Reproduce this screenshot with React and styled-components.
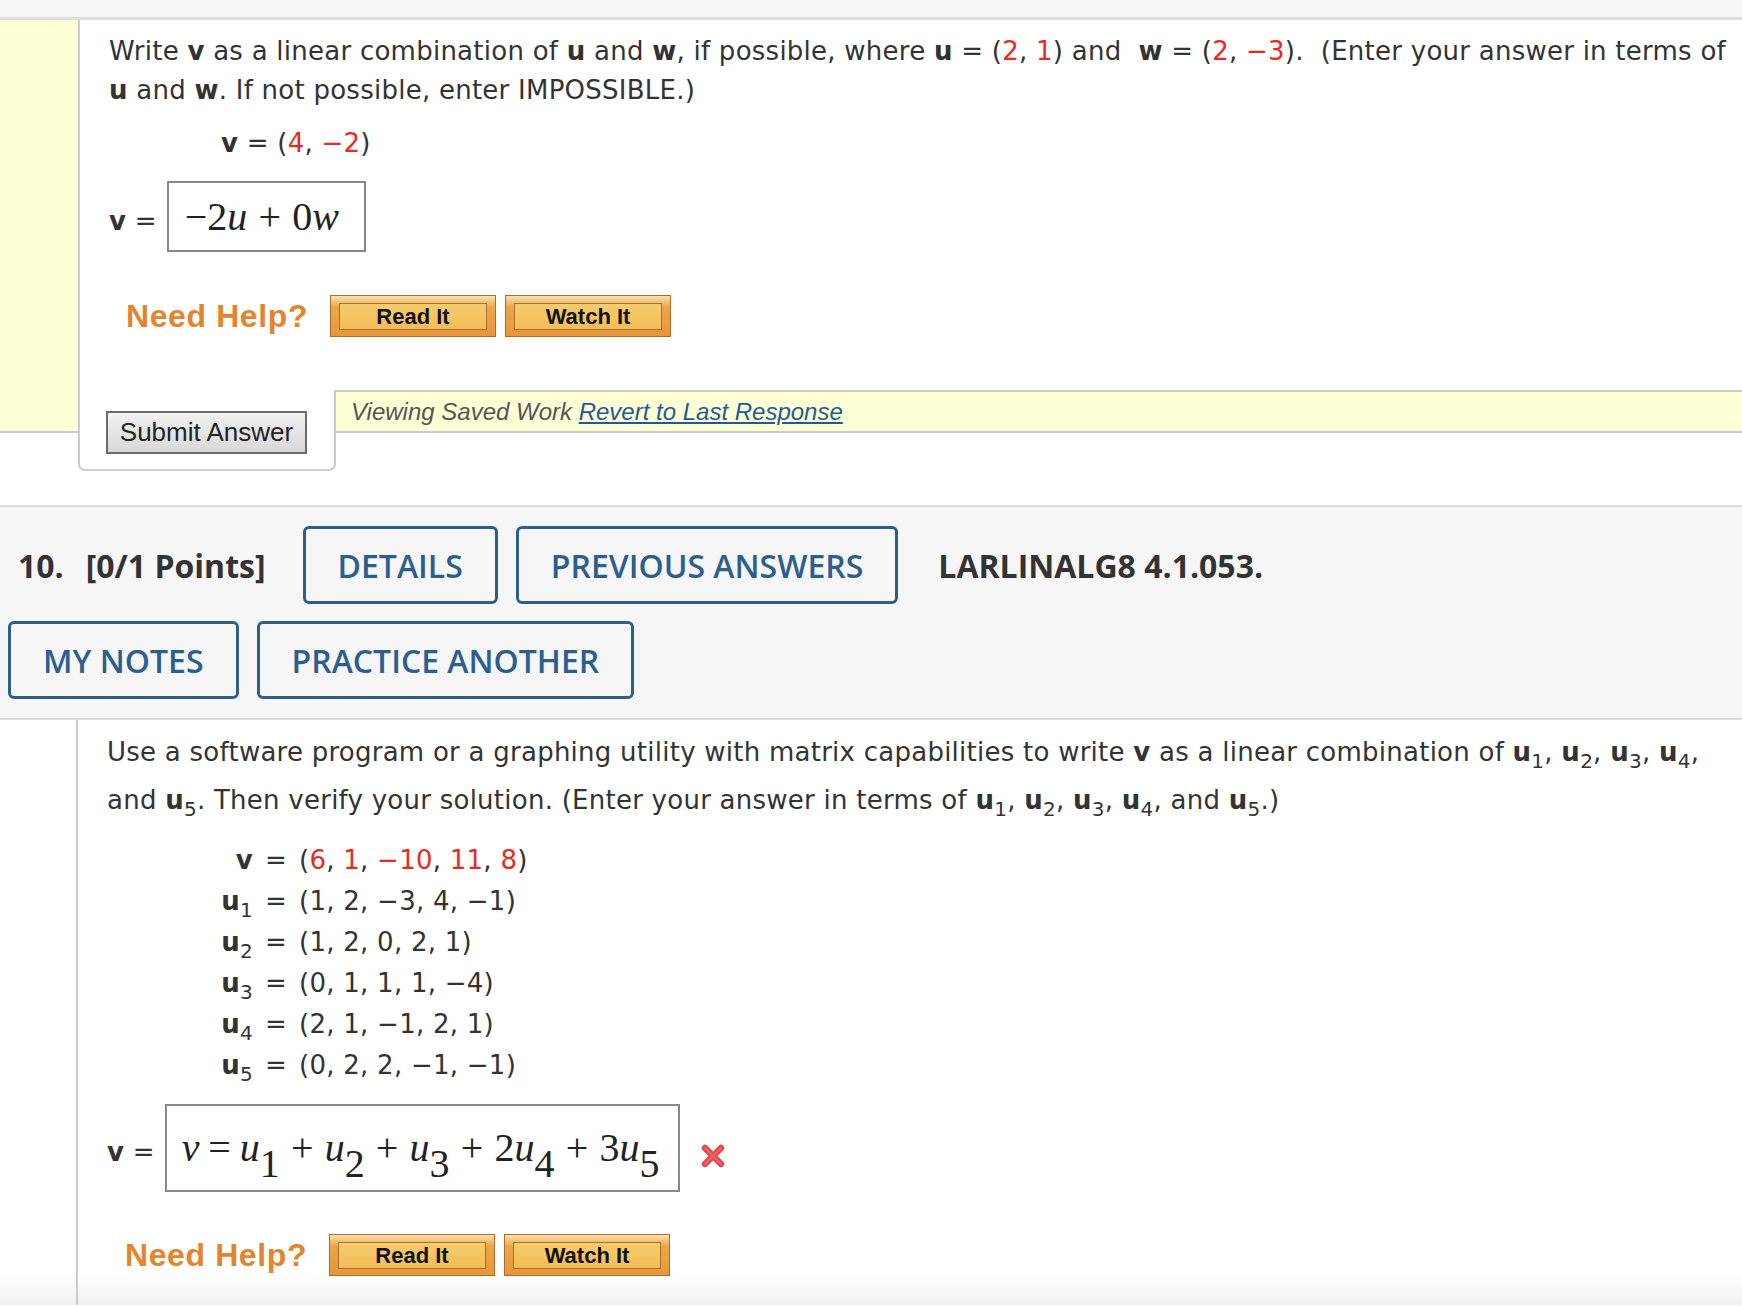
import React from 'react'
import styled, { createGlobalStyle } from 'styled-components'

const GlobalStyle = createGlobalStyle`
  html, body {
    margin: 0;
    padding: 0;
    background: #ffffff;
  }
  body {
    font-family: "DejaVu Sans", Verdana, sans-serif;
    color: #333333;
  }
`

const fadeBg = 'linear-gradient(to bottom, #ffffff calc(100% - 34px), #f1f1f1 100%)'

const Page = styled.div`
  width: 1742px;
  min-height: 1306px;
  overflow: hidden;
`

const TopStrip = styled.div`
  height: 17px;
  background: #f6f6f6;
  border-bottom: 3px solid #dedede;
`

const QuestionRow = styled.div`
  display: flex;
  background: ${(p) => (p.fade ? fadeBg : '#ffffff')};
`

const Gutter = styled.div`
  flex: none;
  width: ${(p) => p.w}px;
  background: ${(p) => (p.yellow ? '#ffffd6' : 'transparent')};
  border-right: 2px solid #cccccc;
`

const QuestionBody = styled.div`
  flex: 1;
  padding: ${(p) => p.pad};
  font-size: 26px;
  line-height: 39px;
  letter-spacing: 0.25px;
`

const Prompt = styled.div`
  white-space: nowrap;
  line-height: ${(p) => p.lh}px;
`

const B = styled.b`
  font-weight: bold;
`

const Red = styled.span`
  color: #ea2a22;
`

const Sub = styled.sub`
  font-size: 20px;
  line-height: 0;
  vertical-align: -7px;
  font-weight: normal;
`

const GivenLine = styled.div`
  margin: 14px 0 0 112px;
  white-space: nowrap;
`

const VectorTable = styled.div`
  display: grid;
  grid-template-columns: 32px auto auto;
  column-gap: 12px;
  justify-content: start;
  margin: 16px 0 0 114px;
  line-height: 41px;
  white-space: nowrap;
`

const VecLabel = styled.div`
  text-align: right;
  font-weight: bold;
`

const AnswerRow = styled.div`
  display: flex;
  align-items: center;
  margin-top: ${(p) => p.top}px;
`

const AnswerLabel = styled.span`
  margin: 9px 10px 0 0;
  white-space: nowrap;
`

const MathBox = styled.div`
  box-sizing: border-box;
  width: ${(p) => p.w}px;
  height: ${(p) => p.h}px;
  border: 2px solid #888888;
  display: flex;
  align-items: center;
  padding-left: ${(p) => p.padLeft}px;
  background: #ffffff;
`

const MathExpr = styled.span`
  font-family: "Liberation Serif", "Times New Roman", serif;
  font-size: 40px;
  line-height: 1;
  letter-spacing: 0;
  color: #222222;
  white-space: nowrap;
`

const Mi = styled.i`
  font-style: italic;
`

const Mo = styled.span`
  margin: 0 ${(p) => p.space || 0.28}em;
`

const MSub = styled.span`
  font-style: normal;
  vertical-align: -16px;
  line-height: 0;
`

const WrongMark = styled.svg`
  margin: 16px 0 0 20px;
  flex: none;
`

const HelpRow = styled.div`
  display: flex;
  align-items: center;
  margin: ${(p) => p.top}px 0 0 ${(p) => p.left}px;
`

const HelpLabel = styled.span`
  font-family: "Liberation Sans", Arial, sans-serif;
  font-weight: bold;
  font-size: 32px;
  letter-spacing: 0.6px;
  color: #e2852f;
  margin-right: 22px;
  line-height: 1;
`

const HelpButton = styled.button`
  box-sizing: border-box;
  width: 166px;
  height: 42px;
  margin-right: 9px;
  padding: 7px 8px 6px;
  border: 1px solid #ad6c2a;
  background: linear-gradient(to bottom, #fbe2ae 0%, #eda548 28%, #e8973b 100%);
  cursor: pointer;
`

const HelpFace = styled.span`
  display: flex;
  align-items: center;
  justify-content: center;
  height: 100%;
  box-sizing: border-box;
  border: 1px solid #a86f2e;
  background: linear-gradient(to bottom, #f6cc6e, #f2bd57);
  font-family: "Liberation Sans", Arial, sans-serif;
  font-weight: bold;
  font-size: 22px;
  color: #111111;
`

const SubmitRow = styled.div`
  display: flex;
  align-items: flex-start;
`

const GutterCap = styled.div`
  flex: none;
  box-sizing: border-box;
  width: 78px;
  height: 43px;
  background: #ffffd6;
  border-bottom: 2px solid #cccccc;
`

const SubmitTab = styled.div`
  flex: none;
  box-sizing: border-box;
  width: 258px;
  padding: 21px 0 15px 26px;
  border: 2px solid #cccccc;
  border-top: none;
  border-radius: 0 0 7px 7px;
  background: #ffffff;
`

const SubmitButton = styled.button`
  box-sizing: border-box;
  width: 201px;
  height: 43px;
  padding: 0;
  border: 2px solid #6b6b6b;
  background: linear-gradient(to bottom, #f1f1f1, #d8d8d8);
  font-family: "Liberation Sans", Arial, sans-serif;
  font-size: 26px;
  color: #222222;
  cursor: pointer;
`

const SavedBar = styled.div`
  flex: 1;
  box-sizing: border-box;
  height: 43px;
  padding: 0 15px;
  background: #ffffd6;
  border-top: 2px solid #cccccc;
  border-bottom: 2px solid #cccccc;
  font-family: "Liberation Sans", Arial, sans-serif;
  font-style: italic;
  font-size: 24px;
  line-height: 39px;
  color: #555555;
  white-space: nowrap;
`

const RevertLink = styled.a`
  color: #1f5b93;
  text-decoration: underline;
  cursor: pointer;
`

const HeaderBand = styled.div`
  margin-top: 34px;
  padding: 19px 0 19px 8px;
  background: #f6f6f6;
  border-top: 2px solid #dddddd;
  border-bottom: 2px solid #dddddd;
  display: flex;
  flex-direction: column;
  gap: 17px;
  font-family: "Open Sans", "Liberation Sans", sans-serif;
  font-size: 32px;
`

const HeaderRow = styled.div`
  display: flex;
  align-items: center;
  gap: 18px;
`

const PointsLabel = styled.div`
  font-weight: bold;
  color: #333333;
  margin: 0 19px 0 10px;
  white-space: nowrap;
`

const PointsNumber = styled.span`
  margin-right: 22px;
`

const OutlineButton = styled.button`
  box-sizing: border-box;
  height: 78px;
  padding: 0 32px;
  border: 3px solid #2c5e8e;
  border-radius: 6px;
  background: transparent;
  font-family: "Open Sans", "Liberation Sans", sans-serif;
  font-weight: 600;
  font-size: 32px;
  color: #2c5e8e;
  white-space: nowrap;
  cursor: pointer;
`

const ProblemCode = styled.div`
  font-weight: bold;
  color: #333333;
  margin-left: 22px;
  white-space: nowrap;
`

const vectors = [
  { label: 'v', values: ['6', '1', '−10', '11', '8'], red: true },
  { label: 'u', sub: '1', values: ['1', '2', '−3', '4', '−1'] },
  { label: 'u', sub: '2', values: ['1', '2', '0', '2', '1'] },
  { label: 'u', sub: '3', values: ['0', '1', '1', '1', '−4'] },
  { label: 'u', sub: '4', values: ['2', '1', '−1', '2', '1'] },
  { label: 'u', sub: '5', values: ['0', '2', '2', '−1', '−1'] },
]

function Tuple({ values, red }) {
  return (
    <span>
      (
      {values.map((v, i) => (
        <React.Fragment key={i}>
          {i > 0 && ', '}
          {red ? <Red>{v}</Red> : v}
        </React.Fragment>
      ))}
      )
    </span>
  )
}

function NeedHelp({ top, left }) {
  return (
    <HelpRow top={top} left={left}>
      <HelpLabel>Need Help?</HelpLabel>
      <HelpButton>
        <HelpFace>Read It</HelpFace>
      </HelpButton>
      <HelpButton>
        <HelpFace>Watch It</HelpFace>
      </HelpButton>
    </HelpRow>
  )
}

function U({ n }) {
  return (
    <>
      <B>u</B>
      <Sub>{n}</Sub>
    </>
  )
}

export default function App() {
  return (
    <Page>
      <GlobalStyle />
      <TopStrip />

      <QuestionRow>
        <Gutter w={78} yellow />
        <QuestionBody pad="12px 0 53px 29px">
          <Prompt lh={39}>
            Write <B>v</B> as a linear combination of <B>u</B> and <B>w</B>, if possible, where <B>u</B> = (
            <Red>2</Red>, <Red>1</Red>) and&nbsp; <B>w</B> = (<Red>2</Red>, <Red>−3</Red>).&nbsp; (Enter your
            answer in terms of
            <br />
            <B>u</B> and <B>w</B>. If not possible, enter IMPOSSIBLE.)
          </Prompt>
          <GivenLine>
            <B>v</B> = (<Red>4</Red>, <Red>−2</Red>)
          </GivenLine>
          <AnswerRow top={18}>
            <AnswerLabel>
              <B>v</B> =
            </AnswerLabel>
            <MathBox w={199} h={71} padLeft={16}>
              <MathExpr>
                −2<Mi>u</Mi>
                <Mo>+</Mo>0<Mi>w</Mi>
              </MathExpr>
            </MathBox>
          </AnswerRow>
          <NeedHelp top={43} left={17} />
        </QuestionBody>
      </QuestionRow>

      <SubmitRow>
        <GutterCap />
        <SubmitTab>
          <SubmitButton>Submit Answer</SubmitButton>
        </SubmitTab>
        <SavedBar>
          Viewing Saved Work <RevertLink>Revert to Last Response</RevertLink>
        </SavedBar>
      </SubmitRow>

      <HeaderBand>
        <HeaderRow>
          <PointsLabel>
            <PointsNumber>10.</PointsNumber>[0/1 Points]
          </PointsLabel>
          <OutlineButton>DETAILS</OutlineButton>
          <OutlineButton>PREVIOUS ANSWERS</OutlineButton>
          <ProblemCode>LARLINALG8 4.1.053.</ProblemCode>
        </HeaderRow>
        <HeaderRow>
          <OutlineButton>MY NOTES</OutlineButton>
          <OutlineButton>PRACTICE ANOTHER</OutlineButton>
        </HeaderRow>
      </HeaderBand>

      <QuestionRow fade>
        <Gutter w={76} />
        <QuestionBody pad="8px 0 29px 29px">
          <Prompt lh={48}>
            Use a software program or a graphing utility with matrix capabilities to write <B>v</B> as a linear
            combination of <U n="1" />, <U n="2" />, <U n="3" />, <U n="4" />,
            <br />
            and <U n="5" />. Then verify your solution. (Enter your answer in terms of <U n="1" />, <U n="2" />,{' '}
            <U n="3" />, <U n="4" />, and <U n="5" />.)
          </Prompt>
          <VectorTable>
            {vectors.map((vec, i) => (
              <React.Fragment key={i}>
                <VecLabel>
                  {vec.label}
                  {vec.sub && <Sub>{vec.sub}</Sub>}
                </VecLabel>
                <span>=</span>
                <Tuple values={vec.values} red={vec.red} />
              </React.Fragment>
            ))}
          </VectorTable>
          <AnswerRow top={18}>
            <AnswerLabel>
              <B>v</B> =
            </AnswerLabel>
            <MathBox w={515} h={88} padLeft={15}>
              <MathExpr>
                <Mi>v</Mi>
                <Mo space={0.22}>=</Mo>
                <Mi>u</Mi>
                <MSub>1</MSub>
                <Mo>+</Mo>
                <Mi>u</Mi>
                <MSub>2</MSub>
                <Mo>+</Mo>
                <Mi>u</Mi>
                <MSub>3</MSub>
                <Mo>+</Mo>2<Mi>u</Mi>
                <MSub>4</MSub>
                <Mo>+</Mo>3<Mi>u</Mi>
                <MSub>5</MSub>
              </MathExpr>
            </MathBox>
            <WrongMark width="26" height="26" viewBox="0 0 26 26">
              <path d="M5 5 L21 21 M21 5 L5 21" stroke="#e04a4d" strokeWidth="6.5" strokeLinecap="round" />
              <path d="M5 5 L21 21 M21 5 L5 21" stroke="#f07a7c" strokeWidth="2" strokeLinecap="round" opacity="0.6" />
            </WrongMark>
          </AnswerRow>
          <NeedHelp top={42} left={18} />
        </QuestionBody>
      </QuestionRow>
    </Page>
  )
}
